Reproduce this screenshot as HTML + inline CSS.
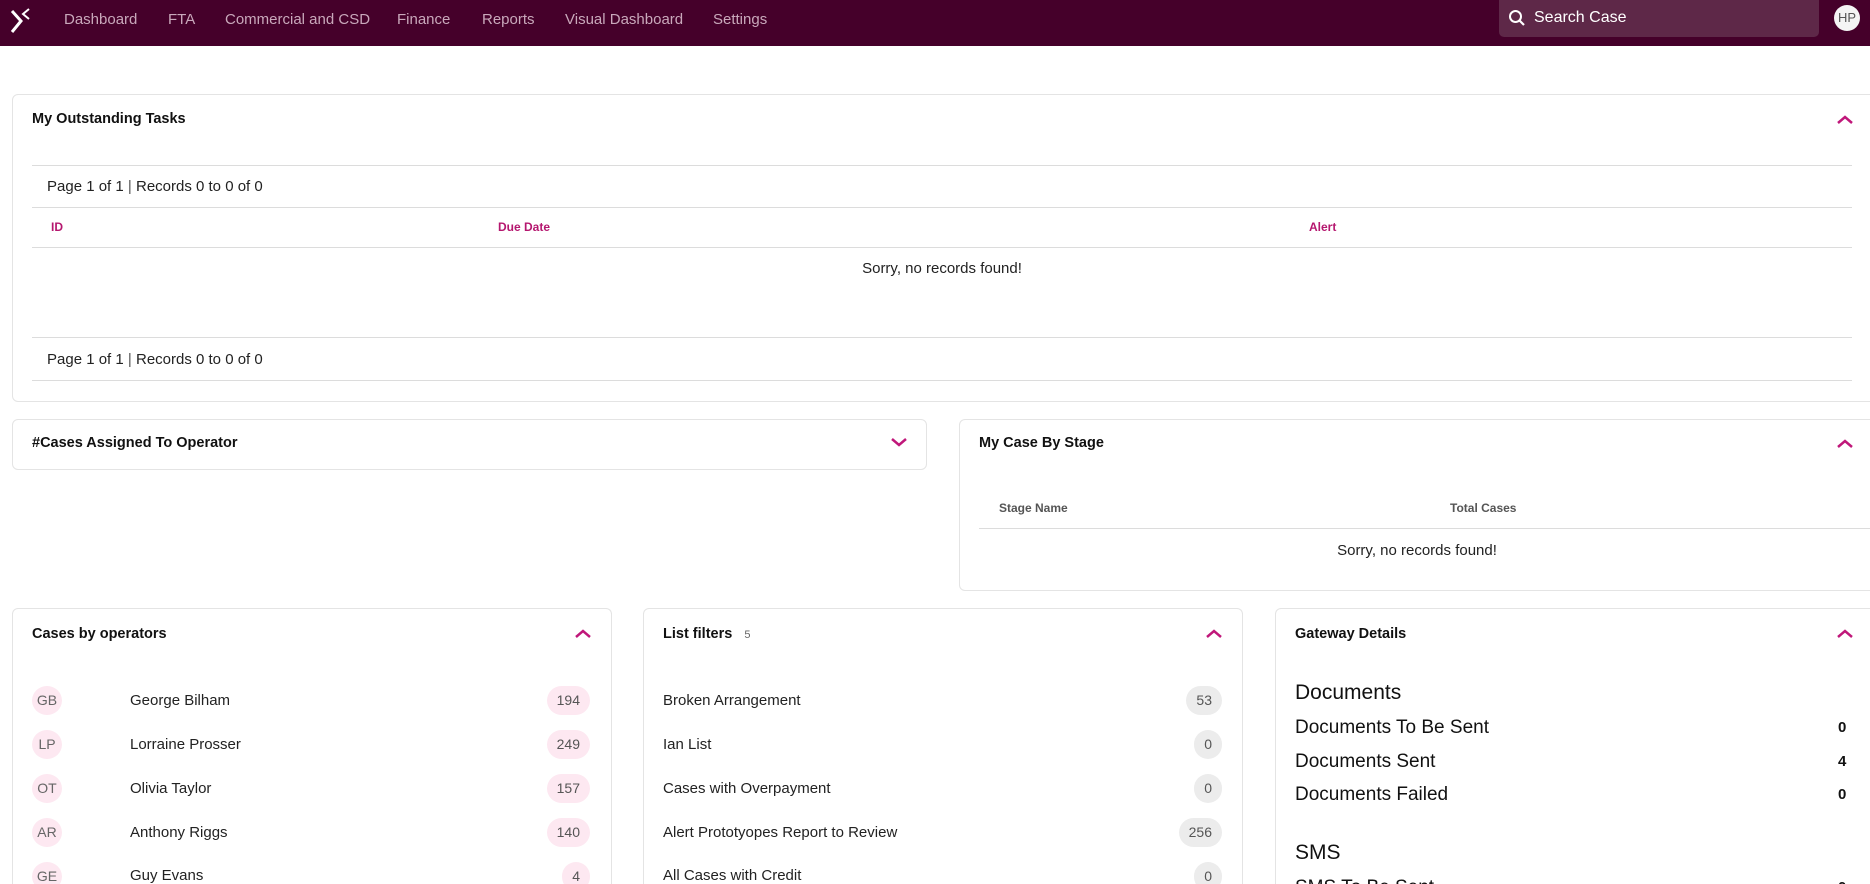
<!DOCTYPE html>
<html><head><meta charset="utf-8"><style>
*{box-sizing:border-box;margin:0;padding:0}
html{width:1870px;height:884px;overflow:hidden}
body{width:1870px;height:884px;overflow:hidden;background:#fff;font-family:"Liberation Sans",sans-serif;color:#1a1a1a}
#w{position:relative;width:1870px;height:884px;overflow:hidden}
.a{position:absolute;white-space:nowrap}
.nav{position:absolute;left:0;top:0;width:1870px;height:46px;background:#45002a}
.nl{position:absolute;top:11px;font-size:15px;color:#c9a8bb}
.card{position:absolute;border:1px solid #e4e4e4;border-radius:6px;background:#fff}
.cb{border-bottom:none;border-radius:6px 6px 0 0}
.t{font-size:14.5px;font-weight:bold;color:#111}
.ln{position:absolute;height:1px;background:#dcdcdc}
.ch{position:absolute;width:18px;height:10px}
.txt{font-size:15px;color:#222}
.av{position:absolute;width:30px;height:29px;border-radius:50%;background:#fde8f1;color:#666;font-size:14px;text-align:center;line-height:29px}
.bd{position:absolute;height:29px;border-radius:15px;font-size:14px;color:#555;text-align:center;line-height:29px;padding:0 10px;min-width:26px}
.pk{background:#fde8f1}.gr{background:#ececec}
.th{font-size:12px;font-weight:bold;color:#b5176f}
.gw{font-size:19px;color:#111}
.gv{font-size:15px;font-weight:bold;color:#111}
</style></head><body><div id="w">
<div class="nav">
<svg class="a" style="left:10px;top:5px" width="22" height="28" viewBox="0 0 22 28"><path d="M2 6 L11 16 L2 27" stroke="#fff" stroke-width="3" fill="none"/><path d="M19 4 L13 9 L19 14" stroke="#fff" stroke-width="2" fill="none"/></svg>
<div class="nl" style="left:64px">Dashboard</div>
<div class="nl" style="left:168px">FTA</div>
<div class="nl" style="left:225px">Commercial and CSD</div>
<div class="nl" style="left:397px">Finance</div>
<div class="nl" style="left:482px">Reports</div>
<div class="nl" style="left:565px">Visual Dashboard</div>
<div class="nl" style="left:713px">Settings</div>
<div class="a" style="left:1499px;top:0;width:320px;height:37px;background:#5e2848;border-radius:0 0 5px 5px"></div>
<svg class="a" style="left:1508px;top:9px" width="18" height="18" viewBox="0 0 18 18"><circle cx="7.5" cy="7.5" r="5.5" stroke="#fff" stroke-width="2" fill="none"/><path d="M11.5 11.5 L16 16" stroke="#fff" stroke-width="2.2"/></svg>
<div class="a" style="left:1534px;top:9px;font-size:16px;color:#fff">Search Case</div>
<div class="a" style="left:1834px;top:5px;width:26px;height:26px;border-radius:50%;background:#f4f4f4;color:#555;font-size:13px;text-align:center;line-height:26px">HP</div>
</div>

<div class="card" style="left:12px;top:94px;width:1880px;height:308px"></div>
<div class="a t" style="left:32px;top:111px">My Outstanding Tasks</div>
<svg class="ch" style="left:1836px;top:115px" viewBox="0 0 18 10"><path d="M2 8 L9 2 L16 8" stroke="#c0177a" stroke-width="2.5" fill="none"/></svg>
<div class="ln" style="left:32px;top:165px;width:1820px"></div>
<div class="a txt" style="left:47px;top:178px">Page 1 of 1 <span style="color:#555">|</span> Records 0 to 0 of 0</div>
<div class="ln" style="left:32px;top:207px;width:1820px"></div>
<div class="a th" style="left:51px;top:220px">ID</div>
<div class="a th" style="left:498px;top:220px">Due Date</div>
<div class="a th" style="left:1309px;top:220px">Alert</div>
<div class="ln" style="left:32px;top:247px;width:1820px"></div>
<div class="a txt" style="left:0;width:1884px;text-align:center;top:260px">Sorry, no records found!</div>
<div class="ln" style="left:32px;top:337px;width:1820px"></div>
<div class="a txt" style="left:47px;top:351px">Page 1 of 1 <span style="color:#555">|</span> Records 0 to 0 of 0</div>
<div class="ln" style="left:32px;top:380px;width:1820px"></div>

<div class="card" style="left:12px;top:419px;width:915px;height:51px"></div>
<div class="a t" style="left:32px;top:435px">#Cases Assigned To Operator</div>
<svg class="ch" style="left:890px;top:437px" viewBox="0 0 18 10"><path d="M2 2 L9 8 L16 2" stroke="#c0177a" stroke-width="2.5" fill="none"/></svg>

<div class="card" style="left:959px;top:419px;width:930px;height:172px"></div>
<div class="a t" style="left:979px;top:435px">My Case By Stage</div>
<svg class="ch" style="left:1836px;top:439px" viewBox="0 0 18 10"><path d="M2 8 L9 2 L16 8" stroke="#c0177a" stroke-width="2.5" fill="none"/></svg>
<div class="a" style="left:999px;top:501px;font-size:12px;font-weight:bold;color:#555">Stage Name</div>
<div class="a" style="left:1450px;top:501px;font-size:12px;font-weight:bold;color:#555">Total Cases</div>
<div class="ln" style="left:979px;top:528px;width:891px"></div>
<div class="a txt" style="left:1317px;width:200px;text-align:center;top:542px">Sorry, no records found!</div>

<div class="card cb" style="left:12px;top:608px;width:600px;height:276px"></div>
<div class="a t" style="left:32px;top:626px">Cases by operators</div>
<svg class="ch" style="left:574px;top:629px" viewBox="0 0 18 10"><path d="M2 8 L9 2 L16 8" stroke="#c0177a" stroke-width="2.5" fill="none"/></svg>
<div class="av" style="left:32px;top:686px">GB</div><div class="a txt" style="left:130px;top:692px">George Bilham</div><div class="bd pk" style="right:1280px;top:686px">194</div>
<div class="av" style="left:32px;top:730px">LP</div><div class="a txt" style="left:130px;top:736px">Lorraine Prosser</div><div class="bd pk" style="right:1280px;top:730px">249</div>
<div class="av" style="left:32px;top:774px">OT</div><div class="a txt" style="left:130px;top:780px">Olivia Taylor</div><div class="bd pk" style="right:1280px;top:774px">157</div>
<div class="av" style="left:32px;top:818px">AR</div><div class="a txt" style="left:130px;top:824px">Anthony Riggs</div><div class="bd pk" style="right:1280px;top:818px">140</div>
<div class="av" style="left:32px;top:862px">GE</div><div class="a txt" style="left:130px;top:867px">Guy Evans</div><div class="bd pk" style="right:1280px;top:862px">4</div>

<div class="card cb" style="left:643px;top:608px;width:600px;height:276px"></div>
<div class="a t" style="left:663px;top:626px">List filters <span style="font-weight:normal;font-size:11px;color:#666;margin-left:8px">5</span></div>
<svg class="ch" style="left:1205px;top:629px" viewBox="0 0 18 10"><path d="M2 8 L9 2 L16 8" stroke="#c0177a" stroke-width="2.5" fill="none"/></svg>
<div class="a txt" style="left:663px;top:692px">Broken Arrangement</div><div class="bd gr" style="right:648px;top:686px">53</div>
<div class="a txt" style="left:663px;top:736px">Ian List</div><div class="bd gr" style="right:648px;top:730px">0</div>
<div class="a txt" style="left:663px;top:780px">Cases with Overpayment</div><div class="bd gr" style="right:648px;top:774px">0</div>
<div class="a txt" style="left:663px;top:824px">Alert Prototyopes Report to Review</div><div class="bd gr" style="right:648px;top:818px">256</div>
<div class="a txt" style="left:663px;top:867px">All Cases with Credit</div><div class="bd gr" style="right:648px;top:862px">0</div>

<div class="card cb" style="left:1275px;top:608px;width:620px;height:276px"></div>
<div class="a t" style="left:1295px;top:626px">Gateway Details</div>
<svg class="ch" style="left:1836px;top:629px" viewBox="0 0 18 10"><path d="M2 8 L9 2 L16 8" stroke="#c0177a" stroke-width="2.5" fill="none"/></svg>
<div class="a" style="left:1295px;top:681px;font-size:21px;color:#111">Documents</div>
<div class="a gw" style="left:1295px;top:717px">Documents To Be Sent</div><div class="a gv" style="left:1838px;top:719px">0</div>
<div class="a gw" style="left:1295px;top:751px">Documents Sent</div><div class="a gv" style="left:1838px;top:753px">4</div>
<div class="a gw" style="left:1295px;top:784px">Documents Failed</div><div class="a gv" style="left:1838px;top:786px">0</div>
<div class="a" style="left:1295px;top:841px;font-size:21px;color:#111">SMS</div>
<div class="a gw" style="left:1295px;top:877px">SMS To Be Sent</div><div class="a gv" style="left:1838px;top:879px">0</div>
</div></body></html>
